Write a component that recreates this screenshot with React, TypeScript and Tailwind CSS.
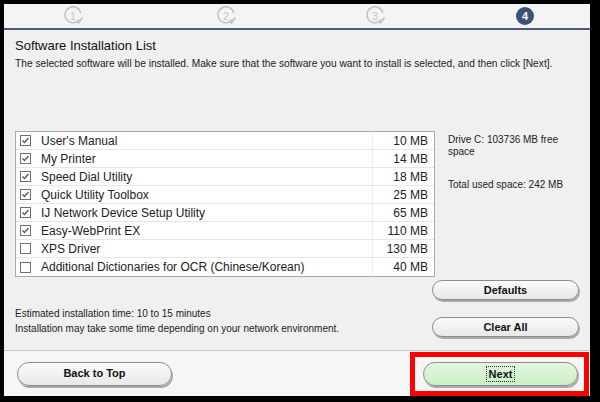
import React from "react";

const rows: [string, string, boolean][] = [
  ["User's Manual", "10 MB", true],
  ["My Printer", "14 MB", true],
  ["Speed Dial Utility", "18 MB", true],
  ["Quick Utility Toolbox", "25 MB", true],
  ["IJ Network Device Setup Utility", "65 MB", true],
  ["Easy-WebPrint EX", "110 MB", true],
  ["XPS Driver", "130 MB", false],
  ["Additional Dictionaries for OCR (Chinese/Korean)", "40 MB", false],
];

function Step({ n }: { n: number }) {
  return (
    <svg width="20" height="20" viewBox="0 0 20 20">
      <path d="M15.5 13.5 A8 8 0 1 1 16.8 7" fill="none" stroke="#c4c4c4" strokeWidth="1.6" />
      <path d="M12.5 14.5 L14.5 17 L18.5 11.5" fill="none" stroke="#c4c4c4" strokeWidth="1.8" />
      <text x="9" y="13.5" textAnchor="middle" fontSize="10" fontFamily="Liberation Sans, Arial, sans-serif" fill="#c4c4c4">{n}</text>
    </svg>
  );
}

function CheckBox({ on }: { on: boolean }) {
  return (
    <svg width="11" height="11" viewBox="0 0 11 11">
      <rect x="0.5" y="0.5" width="10" height="10" fill="#fff" stroke="#707070" />
      {on && <path d="M2.5 5.5 L4.5 7.5 L8.5 3" fill="none" stroke="#555" strokeWidth="1.3" />}
    </svg>
  );
}

function Btn({ label, green, w, h, focus }: { label: string; green?: boolean; w: string; h: string; focus?: boolean }) {
  return (
    <div
      className={`${w} ${h} rounded-full border border-[#8c8c8c] flex items-center justify-center shadow-[1px_2px_0_#a8a8a8] ${
        green ? "bg-gradient-to-b from-[#e4f7df] to-[#cdeec5]" : "bg-gradient-to-b from-[#fbfbfb] to-[#e8e8e8]"
      }`}
    >
      <span
        className={`font-bold text-[11px] text-[#111] ${focus ? "border border-dotted border-[#333] px-[2px] leading-[14px]" : ""}`}
      >
        {label}
      </span>
    </div>
  );
}

export default function App() {
  return (
    <div
      className="w-[600px] h-[402px] bg-black pt-[4px] pl-[4px] pr-[10px] pb-[6px] relative"
      style={{ fontFamily: "'Liberation Sans', Arial, sans-serif" }}
    >
      <div className="h-full bg-[#f0f0f0] flex flex-col">
        <div className="h-[24px] bg-[#f4f4f4] flex items-center shrink-0">
          <div className="ml-[60px]"><Step n={1} /></div>
          <div className="ml-[133px]"><Step n={2} /></div>
          <div className="ml-[129px]"><Step n={3} /></div>
          <div className="ml-[130px] w-[18px] h-[18px] rounded-full bg-[#3d5078] text-white text-[11px] font-bold flex items-center justify-center">4</div>
        </div>
        <div className="h-[2px] bg-[#4a5a80] shrink-0" />
        <div className="flex-1 px-[11px] pt-[8px] flex flex-col">
          <div className="text-[13px] leading-[16px] text-[#111]">Software Installation List</div>
          <div className="text-[10.2px] leading-[13px] text-[#222] mt-[3px]">
            The selected software will be installed. Make sure that the software you want to install is selected, and then click [Next].
          </div>
          <div className="flex mt-[61px]">
            <div className="w-[420px] border border-[#aaaaaa] bg-white">
              {rows.map(([name, size, on], i) => (
                <div key={i} className={`flex h-[18px] items-center ${i < rows.length - 1 ? "border-b border-[#e6e6e6]" : ""}`}>
                  <div className="w-[24px] pl-[4px] flex items-center"><CheckBox on={on} /></div>
                  <div className="flex-1 text-[12px] text-[#222] pl-[1px] whitespace-nowrap">{name}</div>
                  <div className="w-[62px] h-full border-l border-[#ececec] flex items-center justify-end pr-[6px] text-[12px] text-[#222]">{size}</div>
                </div>
              ))}
            </div>
            <div className="ml-[13px] w-[120px] text-[10px] leading-[12px] text-[#222] pt-[3px]">
              <div>Drive C: 103736 MB free space</div>
              <div className="mt-[21px]">Total used space: 242 MB</div>
            </div>
          </div>
          <div className="flex mt-[3px]">
            <div className="w-[417px] pt-[26px] text-[10px] text-[#222]">
              <div className="leading-[15px]">Estimated installation time: 10 to 15 minutes</div>
              <div className="leading-[15px]">Installation may take some time depending on your network environment.</div>
            </div>
            <div className="flex flex-col gap-[17px]">
              <Btn label="Defaults" w="w-[147px]" h="h-[20px]" />
              <Btn label="Clear All" w="w-[147px]" h="h-[20px]" />
            </div>
          </div>
        </div>
        <div className="h-[1px] bg-[#c6c6c6] shrink-0" />
        <div className="h-[45px] shrink-0 bg-[#f6f6f6] flex items-center pl-[13px] pr-[12px] justify-between">
          <Btn label="Back to Top" w="w-[155px]" h="h-[24px]" />
          <Btn label="Next" w="w-[155px]" h="h-[24px]" green focus />
        </div>
      </div>
      <div className="absolute left-[410px] top-[352px] w-[179px] h-[44px] border-[5px] border-[#ff0000]" />
    </div>
  );
}
